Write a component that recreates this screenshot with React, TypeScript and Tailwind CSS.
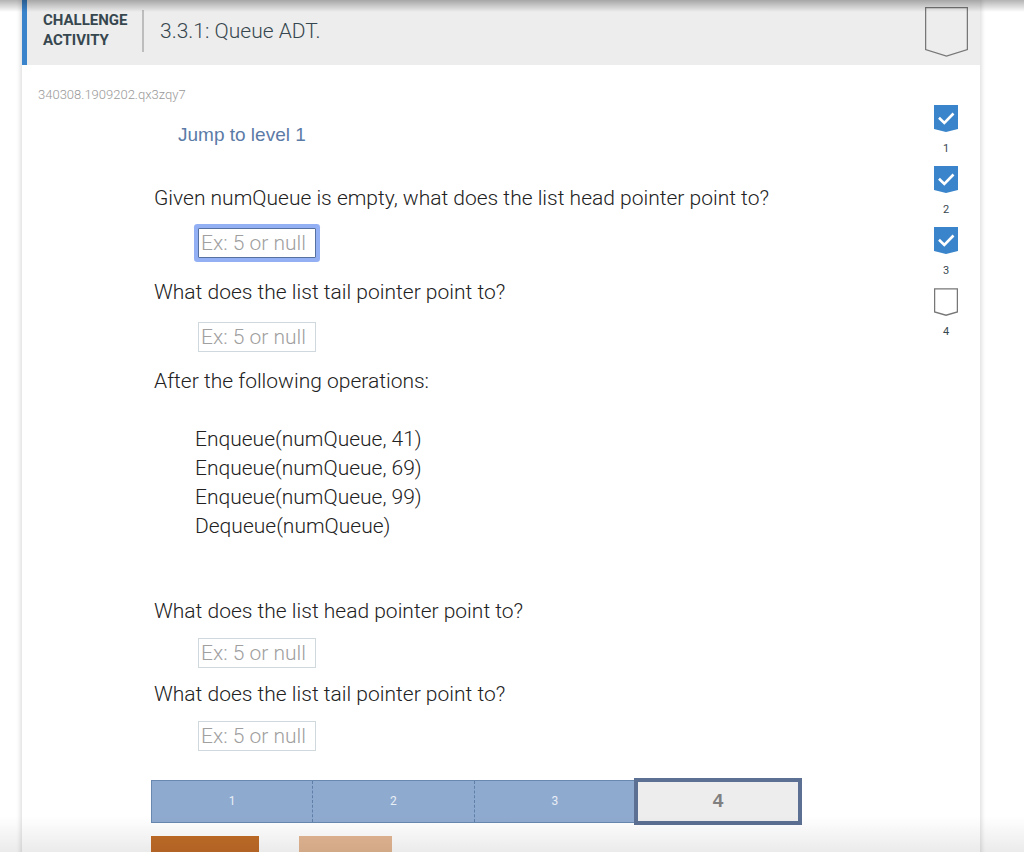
import clsx from "clsx"

const levels = [
  { id: 1, done: true },
  { id: 2, done: true },
  { id: 3, done: true },
  { id: 4, done: false },
]

const operations = [
  "Enqueue(numQueue, 41)",
  "Enqueue(numQueue, 69)",
  "Enqueue(numQueue, 99)",
  "Dequeue(numQueue)",
]

const Chevron = ({ done }: { done: boolean }) => (
  <svg width="24" height="28" viewBox="0 0 24 28" fill="none">
    {done ? (
      <>
        <path d="M0 0H24V24L12 27L0 24Z" fill="#3a84cb" />
        <path d="M5 12.8L10.3 18L19.5 8.5" stroke="#fff" strokeWidth="2.6" />
      </>
    ) : (
      <path d="M.6 .8H23.4V24L12 27.2L.6 24Z" stroke="#777" strokeWidth="1.3" />
    )}
  </svg>
)

const Question = ({ id, text, active, className, gap }: {
  id: string
  text: string
  active?: boolean
  className?: string
  gap: string
}) => (
  <div className={clsx("flex flex-col items-start", className)}>
    <label htmlFor={id}>{text}</label>
    <input
      id={id}
      type="text"
      placeholder="Ex: 5 or null"
      className={clsx(
        "ml-11 h-[30px] w-[118px] border bg-white px-0.5 font-light outline-none placeholder:text-[#a0a0a0]",
        gap,
        active ? "border-[#56709f] ring-4 ring-[#94b0f5] rounded-[1px]" : "border-[#cfd8dc]"
      )}
    />
  </div>
)

const Header = () => (
  <header className="flex h-[65px] items-start border-l-[5px] border-[#3a84cb] bg-[#ededed] pr-3 text-[#37474f]">
    <div className="mt-[10px] flex h-[42px] w-[117px] items-start border-r-2 border-[#bdbdbd] pl-4">
      <span className="w-[90px] text-[15px] leading-5 font-bold">CHALLENGE ACTIVITY</span>
    </div>
    <h1 className="mt-4 ml-4 flex-1 text-[21px] leading-[30px] font-light">3.3.1: Queue ADT.</h1>
    <svg className="mt-[7px]" width="43" height="50" viewBox="0 0 43 50" fill="none">
      <path d="M.6 .6H42.4V42.6L21.5 49L.6 42.6Z" stroke="#777" strokeWidth="1.3" />
    </svg>
  </header>
)

const LevelBar = () => (
  <nav className="mt-[27px] -ml-[3px] flex h-[47px] w-[651px] items-center text-[12px] font-normal">
    <div className="flex h-[43px] flex-1 border border-[#6888b0] bg-[#8faacf] text-[#e8eef6]">
      {levels.slice(0, 3).map(({ id }) => (
        <button key={id} className="flex-1 border-r border-dashed border-[#5f7ea8] pb-0.5 last:border-r-0">
          {id}
        </button>
      ))}
    </div>
    <button className="relative -ml-0.5 h-[47px] w-[168px] border-4 border-[#5c7093] bg-[#ededed] pb-0.5 font-['Liberation_Sans',sans-serif] text-[19px] font-bold text-[#808080]">
      4
    </button>
  </nav>
)

export default function App() {
  return (
    <div className="relative h-screen overflow-hidden bg-white pr-11 pl-[22px] font-['Roboto',sans-serif]">
      <section className="min-h-full bg-white shadow-[0_0_4px_2px_rgba(0,0,0,0.12)]">
        <Header />
        <div className="flex">
          <main className="flex-1 pt-5 pl-4">
            <p className="text-[13px] leading-5 font-light text-[#999]">340308.1909202.qx3zqy7</p>
            <div className="ml-[116px] text-[21px] leading-[30px] font-light text-[#222]">
              <a href="#level-1" className="mt-[18px] ml-6 block w-fit font-['Liberation_Sans',sans-serif] text-[19px] leading-6 text-[#5b7ba7]">
                Jump to level 1
              </a>
              <Question id="head-empty" text="Given numQueue is empty, what does the list head pointer point to?" active className="mt-9" gap="mt-[15px]" />
              <Question id="tail-empty" text="What does the list tail pointer point to?" className="mt-[19px]" gap="mt-[15px]" />
              <p className="mt-[14px]">After the following operations:</p>
              <ul className="mt-[29px] ml-[41px] leading-[29px]">
                {operations.map((op) => (
                  <li key={op}>{op}</li>
                ))}
              </ul>
              <Question id="head-after" text="What does the list head pointer point to?" className="mt-[55px]" gap="mt-3" />
              <Question id="tail-after" text="What does the list tail pointer point to?" className="mt-[11px]" gap="mt-3" />
              <LevelBar />
              <div className="-ml-[3px] mt-[11px] flex gap-10">
                <button aria-label="Check" className="h-10 w-[108px] bg-[#c16c27]" />
                <button aria-label="Next" className="h-10 w-[93px] bg-[#e4b793]" />
              </div>
            </div>
          </main>
          <ol className="mt-10 mr-[22px] flex flex-col gap-[7px]">
            {levels.map(({ id, done }) => (
              <li key={id} className="flex flex-col items-center gap-[6px] text-[11px] leading-5 text-[#37474f]">
                <Chevron done={done} />
                {id}
              </li>
            ))}
          </ol>
        </div>
      </section>
      <div className="pointer-events-none absolute inset-x-0 top-0 h-3 bg-linear-to-b from-black/30 to-transparent" />
      <div className="pointer-events-none absolute inset-x-0 bottom-0 h-9 bg-linear-to-t from-black/8 to-transparent" />
    </div>
  )
}
